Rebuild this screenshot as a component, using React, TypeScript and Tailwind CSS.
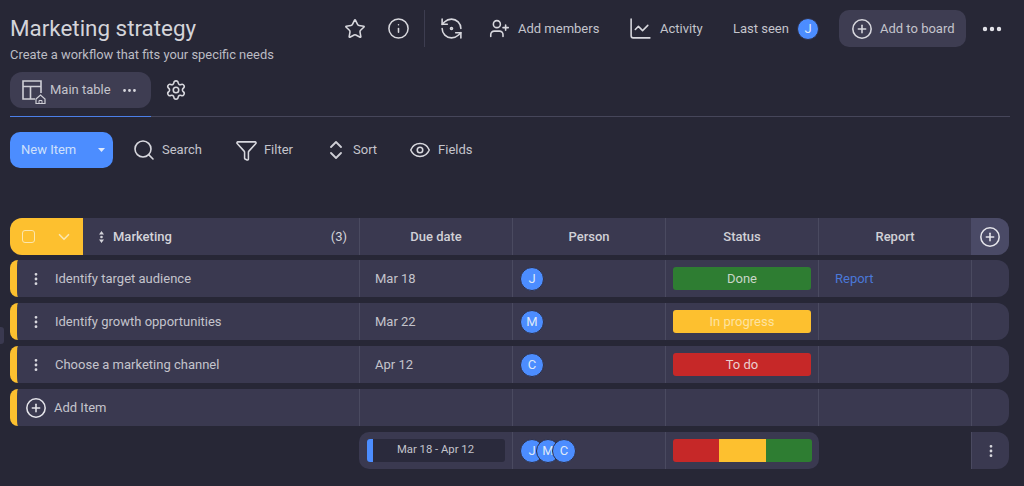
import { type ReactNode } from 'react';
import {
  ChartLine,
  ChevronDown,
  CirclePlus,
  Ellipsis,
  EllipsisVertical,
  Eye,
  Funnel,
  Info,
  RefreshCcwDot,
  Search,
  Settings,
  Star,
  UserPlus,
} from 'lucide-react';

const rows = [
  { name: 'Identify target audience', date: 'Mar 18', person: 'J', status: 'Done', color: 'bg-[#2e7d32]', text: 'text-[#c9d6c8]', report: 'Report' },
  { name: 'Identify growth opportunities', date: 'Mar 22', person: 'M', status: 'In progress', color: 'bg-[#fdc02f]', text: 'text-[#fde3a0]', report: '' },
  { name: 'Choose a marketing channel', date: 'Apr 12', person: 'C', status: 'To do', color: 'bg-[#c62828]', text: 'text-[#eccfcf]', report: '' },
];

const Avatar = ({ letter, size = 'w-[22px] h-[22px]', className = '' }: { letter: string; size?: string; className?: string }) => (
  <div className={`${size} ${className} rounded-full bg-[#4c8dff] border border-[#2f2f45] flex items-center justify-center text-[13px] text-[#dfe8f8] shrink-0`}>
    {letter}
  </div>
);

// Celda de ancho fijo con separador a la izquierda
const Cell = ({ children, width = 'w-[153px]', className = '' }: { children?: ReactNode; width?: string; className?: string }) => (
  <div className={`${width} ${className} h-full border-l border-[#4a4a60] flex items-center shrink-0`}>{children}</div>
);

const Row = ({ children }: { children: ReactNode }) => (
  <div className="flex h-[37px] w-[999px] mb-[6px] bg-[#3a3950] rounded-r-[12px] rounded-l-[8px] border-l-[7px] border-[#fdc02f] overflow-hidden">
    {children}
  </div>
);

const ToolItem = ({ icon, label, className }: { icon: ReactNode; label: string; className: string }) => (
  <div className={`flex items-center ${className}`}>
    {icon}
    <span className="text-[13px] text-[#c4c4cc]">{label}</span>
  </div>
);

const TableIcon = () => (
  <svg width="24" height="26" viewBox="0 0 24 26" fill="none" stroke="#cfcfd6" strokeWidth="1.6" className="shrink-0 mt-[2px]">
    <path d="M19 15V3H1v18h12M1 8.5h18M8.5 8.5V21" />
    <path d="M14 21l4.5-4 4.5 4v4.5h-9z" fill="#3e3d52" strokeWidth="1.2" />
    <path d="M17 25.5v-3h3v3" strokeWidth="1" />
  </svg>
);

const SortIcon = () => (
  <svg width="14" height="18" viewBox="0 0 14 18" fill="none" stroke="#cfcfd6" strokeWidth="1.8" strokeLinecap="round" strokeLinejoin="round">
    <path d="M2 6l5-5 5 5M2 12l5 5 5-5" />
  </svg>
);

const HeaderSortIcon = () => (
  <svg width="5" height="12" viewBox="0 0 5 12" fill="#d4d4da" className="shrink-0">
    <path d="M2.5 0l2.5 3.4H0zM2.5 12L0 8.6h5z" />
    <circle cx="2.5" cy="6" r="1.3" />
  </svg>
);

export default function App() {
  return (
    <div className="relative w-[1024px] h-[486px] overflow-hidden bg-[#272736] pl-[10px] font-['Roboto',sans-serif] text-[#c4c4cc]">
      {/* Cabecera */}
      <div className="flex h-[62px] pt-[10px]">
        <div className="w-[334px] shrink-0">
          <h1 className="text-[22.4px] leading-[36px] text-[#d4d4da]">Marketing strategy</h1>
          <p className="text-[12.9px] leading-[18px] mt-0 text-[#bcbcc4] whitespace-nowrap">Create a workflow that fits your specific needs</p>
        </div>
        <div className="flex items-center h-[37px] text-[13px]">
          <Star size={22} strokeWidth={1.7} className="text-[#d8d8de]" />
          <Info size={23} strokeWidth={1.6} className="ml-[21px] text-[#d8d8de]" />
          <div className="ml-[14px] w-px h-[37px] bg-[#3d3d50]" />
          <RefreshCcwDot size={25} strokeWidth={1.5} className="ml-[14px] text-[#d8d8de]" />
          <UserPlus size={21} strokeWidth={1.8} className="ml-[25px] text-[#d8d8de]" />
          <span className="ml-[8px] w-[80px] whitespace-nowrap">Add members</span>
          <ChartLine size={25} strokeWidth={1.5} className="ml-[30px] text-[#d8d8de]" />
          <span className="ml-[7px] w-[42px]">Activity</span>
          <span className="ml-[31px] w-[56px] whitespace-nowrap">Last seen</span>
          <Avatar letter="J" className="ml-[8px]" />
          <div className="ml-[20px] w-[127px] h-[37px] rounded-[10px] bg-[#3e3d52] flex items-center pl-[12px]">
            <CirclePlus size={22} strokeWidth={1.7} className="text-[#d8d8de]" />
            <span className="ml-[7px] whitespace-nowrap">Add to board</span>
          </div>
          <Ellipsis size={24} strokeWidth={2.4} className="ml-[14px] text-[#e4e4ea]" />
        </div>
      </div>

      {/* Pestañas */}
      <div className="w-[1000px] h-[45px] mt-[10px] border-b border-[#46465a] flex items-start relative">
        <div className="w-[141px] h-[36px] rounded-[12px] bg-[#3e3d52] flex items-center pl-[12px]">
          <TableIcon />
          <span className="ml-[4px] text-[13px]">Main table</span>
          <Ellipsis size={17} strokeWidth={2} className="ml-[10px] text-[#d8d8de]" />
        </div>
        <Settings size={22} strokeWidth={1.7} className="ml-[14px] mt-[7px] text-[#d8d8de]" />
        <div className="absolute left-0 bottom-[-1px] w-[141px] h-px bg-[#4c7fe8]" />
      </div>

      {/* Barra de acciones */}
      <div className="flex items-center h-[36px] mt-[15px]">
        <div className="w-[103px] h-[36px] rounded-[10px] bg-[#4c8dff] flex items-center pl-[11px] text-[13px] text-[#cfe0fb]">
          <span className="whitespace-nowrap">New Item</span>
          <svg width="7" height="4" viewBox="0 0 7 4" fill="#dfe9fb" className="ml-[22px]">
            <path d="M0 0h7L3.5 4z" />
          </svg>
        </div>
        <ToolItem icon={<Search size={24} strokeWidth={1.6} className="text-[#d8d8de] mr-[6px]" />} label="Search" className="ml-[19px]" />
        <ToolItem icon={<Funnel size={23} strokeWidth={1.6} className="text-[#d8d8de] mr-[6px]" />} label="Filter" className="ml-[33px]" />
        <ToolItem icon={<span className="mr-[10px] flex"><SortIcon /></span>} label="Sort" className="ml-[36px]" />
        <ToolItem icon={<Eye size={22} strokeWidth={1.7} className="text-[#d8d8de] mr-[7px]" />} label="Fields" className="ml-[32px]" />
      </div>

      {/* Tabla */}
      <div className="mt-[50px] text-[13px]">
        <div className="flex h-[37px] w-[999px] bg-[#3a3950] rounded-[12px] overflow-hidden mb-[5px] font-medium">
          <div className="w-[73px] h-full bg-[#fdc02f] flex items-center pl-[12px] shrink-0">
            <div className="w-[13px] h-[13px] rounded-[3px] border border-[#fbe6ae]" />
            <ChevronDown size={18} strokeWidth={2.2} className="ml-[20px] text-[#fbe6ae]" />
          </div>
          <div className="w-[276px] flex items-center pl-[16px] pr-[12px] shrink-0 text-[#d4d4da]">
            <HeaderSortIcon />
            <span className="ml-[9px]">Marketing</span>
            <span className="ml-auto font-normal">(3)</span>
          </div>
          {['Due date', 'Person', 'Status', 'Report'].map((title) => (
            <Cell key={title} className="justify-center text-[#d0d0d6]">{title}</Cell>
          ))}
          <Cell width="w-[38px]" className="justify-center bg-[#4a4a66] border-l-0">
            <CirclePlus size={22} strokeWidth={1.7} className="text-[#e4e4ea]" />
          </Cell>
        </div>

        {rows.map((row) => (
          <Row key={row.name}>
            <div className="w-[342px] flex items-center shrink-0 pl-[11px]">
              <EllipsisVertical size={16} strokeWidth={2.2} className="text-[#d8d8de]" />
              <span className="ml-[11px] text-[#c4c4cc]">{row.name}</span>
            </div>
            <Cell className="pl-[15px] text-[#c4c4cc]">{row.date}</Cell>
            <Cell className="pl-[7px]"><Avatar letter={row.person} size="w-[24px] h-[24px]" /></Cell>
            <Cell className="px-[7px]">
              <div className={`w-[138px] h-[23px] rounded-[3px] ${row.color} ${row.text} flex items-center justify-center`}>{row.status}</div>
            </Cell>
            <Cell className="pl-[16px] text-[#4a78d8]">{row.report}</Cell>
            <Cell width="w-[38px]" />
          </Row>
        ))}

        <Row>
          <div className="w-[342px] flex items-center shrink-0 pl-[8px]">
            <CirclePlus size={22} strokeWidth={1.7} className="text-[#e4e4ea]" />
            <span className="ml-[7px]">Add Item</span>
          </div>
          <Cell /><Cell /><Cell /><Cell />
          <Cell width="w-[38px]" />
        </Row>

        {/* Resumen */}
        <div className="flex h-[37px] w-[999px]">
          <div className="ml-[349px] w-[460px] h-full bg-[#3a3950] rounded-[10px] flex items-center overflow-hidden shrink-0">
            <div className="w-[153px] h-full flex items-center pl-[8px] shrink-0">
              <div className="w-[138px] h-[23px] rounded-[3px] bg-[#2a2a3c] flex overflow-hidden">
                <div className="w-[6px] h-full bg-[#4c8dff]" />
                <span className="flex-1 flex items-center justify-center pr-[7px] text-[11.3px] text-[#c4c4cc]">Mar 18 - Apr 12</span>
              </div>
            </div>
            <Cell className="pl-[7px]">
              <Avatar letter="J" size="w-[24px] h-[24px]" />
              <Avatar letter="M" size="w-[24px] h-[24px]" className="ml-[-8px]" />
              <Avatar letter="C" size="w-[24px] h-[24px]" className="ml-[-8px]" />
            </Cell>
            <Cell className="pl-[7px]">
              <div className="w-[139px] h-[23px] rounded-[3px] overflow-hidden flex">
                <div className="flex-1 bg-[#c62828]" />
                <div className="flex-1 bg-[#fdc02f]" />
                <div className="flex-1 bg-[#2e7d32]" />
              </div>
            </Cell>
          </div>
          <div className="ml-[152px] w-[38px] h-full bg-[#3a3950] rounded-r-[12px] border-l border-[#4a4a60] flex items-center justify-center shrink-0">
            <EllipsisVertical size={16} strokeWidth={2.2} className="text-[#d8d8de]" />
          </div>
        </div>
      </div>

      {/* Asa lateral */}
      <div className="absolute left-[-3px] top-[327px] w-[7px] h-[17px] rounded-[3px] bg-[#3a3950]" />
    </div>
  );
}
